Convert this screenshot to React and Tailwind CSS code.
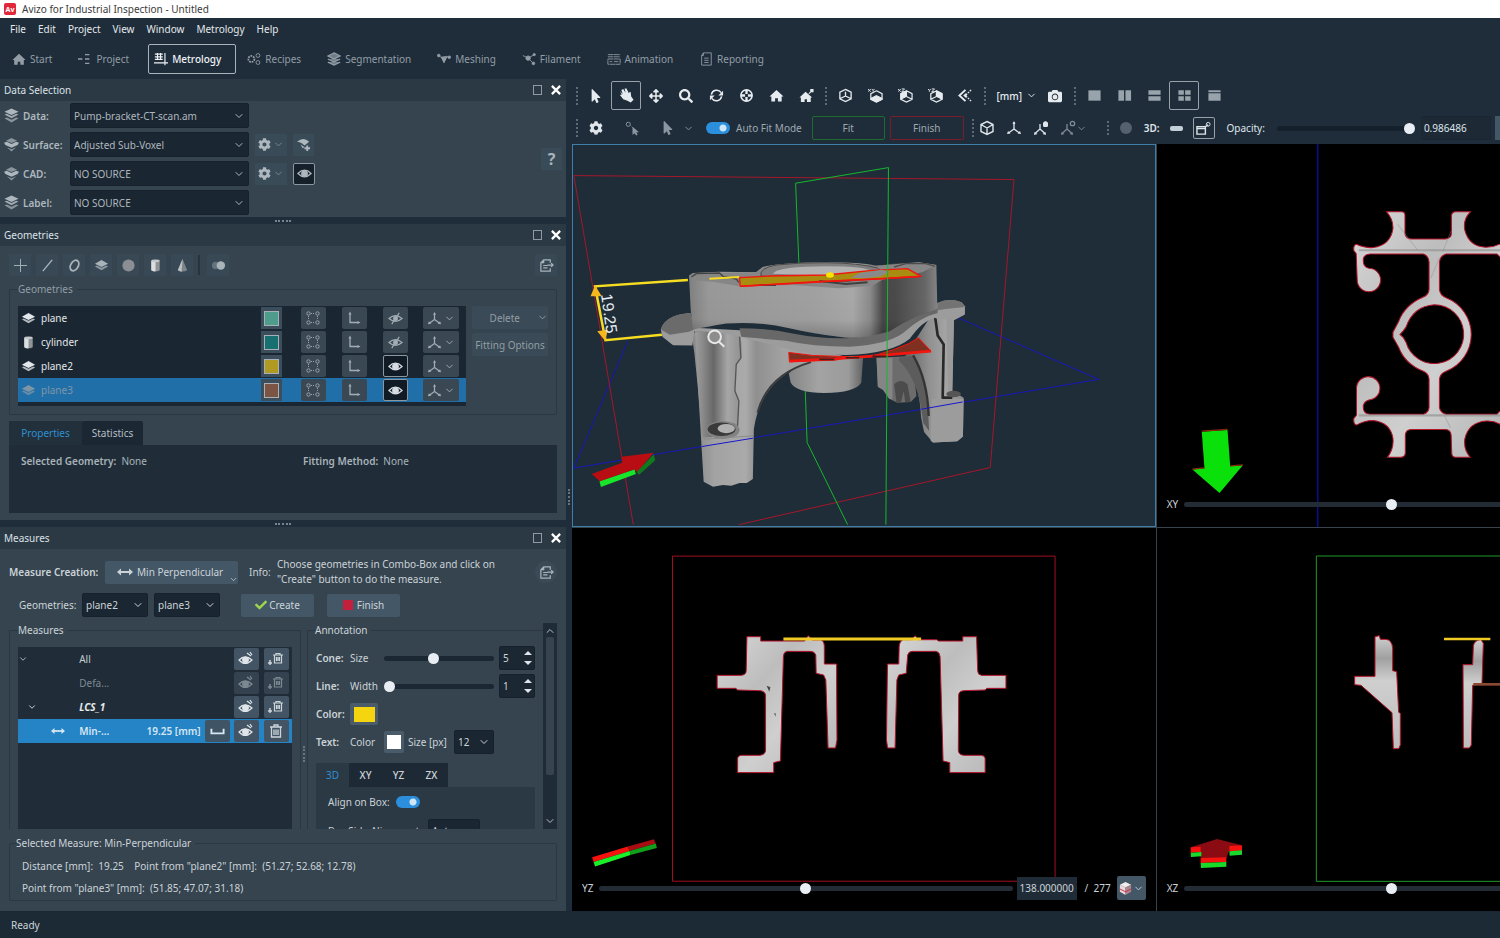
import React, { useState } from 'react';
import { FaArrowsAlt, FaCamera, FaCheck, FaCog, FaMousePointer, FaSearch } from 'react-icons/fa';
import { ChevronDown, ChevronUp } from 'lucide-react';

const menus = ['File', 'Edit', 'Project', 'View', 'Window', 'Metrology', 'Help'];

const workrooms = ['Start', 'Project', 'Metrology', 'Recipes', 'Segmentation', 'Meshing', 'Filament', 'Animation', 'Reporting'];

const sources = [
  { name: 'Data', icon: 'stack', value: 'Pump-bracket-CT-scan.am' },
  { name: 'Surface', icon: 'stackSurface', value: 'Adjusted Sub-Voxel', gear: true, extra: 'surface' },
  { name: 'CAD', icon: 'stackSurface', value: 'NO SOURCE', gear: true, extra: 'eye' },
  { name: 'Label', icon: 'stack', value: 'NO SOURCE' },
];

const geometries = [
  { name: 'plane', icon: 'layers', color: 'bg-[#4d9c8c]', visible: false },
  { name: 'cylinder', icon: 'cylinder', color: 'bg-[#17706f]', visible: false },
  { name: 'plane2', icon: 'layers', color: 'bg-[#b09a22]', visible: true },
  { name: 'plane3', icon: 'layers', color: 'bg-[#7b5444]', visible: true, selected: true },
];

const measures = [
  { name: 'All', open: true, style: 'text-[#c3cbd1]' },
  { name: 'Defa...', style: 'text-[#7d8992]', dim: true },
  { name: 'LCS_1', open: true, nested: true, style: 'font-bold italic text-[#e6ebef]' },
  { name: 'Min-...', value: '19.25 [mm]', selected: true, style: 'font-semibold text-[#d6e6f3]' },
];

function App() {
  return (
    <div className="flex min-h-screen flex-col overflow-hidden bg-[#1f2d3a] font-['Noto_Sans',sans-serif] text-[10px] leading-[14px] text-[#ccd3d8]">
      <header>
        <div className="flex h-[18px] items-center gap-1.5 bg-white pl-1 text-[#3b3b3b]">
          <span className="flex h-3 w-3 items-center justify-center rounded-xs bg-[#e0283a] text-[7px] leading-none font-bold text-white">Av</span>
          <h1>Avizo for Industrial Inspection - Untitled</h1>
        </div>
        <nav className="flex h-[21px] items-center gap-3 pl-2.5 text-[#e3e8ec]">
          {menus.map(menu => <button key={menu} type="button">{menu}</button>)}
        </nav>
        <nav className="flex h-10 items-center gap-1 pl-[5px]">
          {workrooms.map(room => (
            <button
              key={room}
              type="button"
              className={room === 'Metrology'
                ? 'flex h-[30px] items-center gap-1 rounded-xs border border-[#a9b3ba] pr-3.5 pl-[5px] font-medium text-[#eef2f5]'
                : 'flex h-[30px] items-center gap-1 border border-transparent pr-3.5 pl-1.5 text-[#929da6]'}
            >
              <Icon name={room} size={14} />
              {room}
            </button>
          ))}
        </nav>
      </header>
      <main className="flex flex-1">
        <aside className="flex w-[566px] shrink-0 flex-col gap-[7px]">
          <DataSelection />
          <Geometries />
          <Measures />
        </aside>
        <div className="flex w-1.5 shrink-0 justify-center pt-[410px]">
          <span className="h-4 border-l-2 border-dotted border-[#66747f]" />
        </div>
        <section className="flex min-w-0 flex-1 flex-col">
          <ViewToolbar />
          <GeometryToolbar />
          <Views />
        </section>
      </main>
      <footer className="flex h-[27px] items-center border-t border-[#1b2833] bg-[#1c2a36] pl-[11px]">Ready</footer>
    </div>
  );
}

function Panel({ title, children, grow }) {
  return (
    <section className={grow ? 'flex-1 bg-[#35444f]' : 'bg-[#35444f]'}>
      <div className="flex h-[22px] items-center bg-[#2b3945] pr-1 pl-1 text-[#dbe1e5]">
        <h2 className="flex-1">{title}</h2>
        <button type="button" aria-label="Float panel" className="mr-2 h-2.5 w-[9px] border border-[#8f9aa2]" />
        <button type="button" aria-label="Close panel" className="text-white"><Icon name="close" size={12} /></button>
      </div>
      {children}
    </section>
  );
}

function Select({ id, options, className }) {
  return (
    <span className={'relative inline-flex items-center ' + className}>
      <select id={id} aria-label={id} className="h-full w-full appearance-none rounded-xs border border-[#16212b] bg-[#1a2631] pr-4 pl-[3px]">
        {options.map(o => <option key={o}>{o}</option>)}
      </select>
      <ChevronDown size={12} className="pointer-events-none absolute right-1" />
    </span>
  );
}

function Switch({ label, className }) {
  return (
    <label className="flex items-center gap-1.5">
      {className === 'after' && label}
      <input
        type="checkbox"
        aria-label={label}
        defaultChecked
        className="h-3 w-6 appearance-none rounded-full bg-[#2b8fdd] bg-[radial-gradient(circle_at_17px_6px,#cfe6f8_3px,transparent_4px)]"
      />
      {className !== 'after' && label}
    </label>
  );
}

const rangeClass = 'h-3 min-w-0 appearance-none bg-transparent [&::-webkit-slider-runnable-track]:h-[5px] [&::-webkit-slider-runnable-track]:rounded-full [&::-webkit-slider-thumb]:-mt-[3px] [&::-webkit-slider-thumb]:h-[11px] [&::-webkit-slider-thumb]:w-[11px] [&::-webkit-slider-thumb]:appearance-none [&::-webkit-slider-thumb]:rounded-full [&::-webkit-slider-thumb]:bg-[#e8eef4]';

function Slider({ label, value, max, className }) {
  return <input type="range" aria-label={label} defaultValue={value} max={max} className={rangeClass + ' ' + className} />;
}

function DataSelection() {
  return (
    <Panel title="Data Selection">
      <div className="flex items-center pr-1">
        <div className="flex-1">
          {sources.map(({ name, icon, value, gear, extra }) => (
            <div key={name} className="flex h-[29px] items-center pl-1 text-[#aeb7be]">
              <Icon name={icon} size={15} />
              <label htmlFor={name} className="w-[51px] pl-1 font-semibold">{name}:</label>
              <Select id={name} options={[value]} className="h-[25px] w-[179px]" />
              {gear && (
                <button type="button" aria-label={name + ' options'} className="ml-1.5 flex h-[22px] w-8 items-center justify-center gap-0.5 bg-[#3a4b58]">
                  <FaCog size={13} /><ChevronDown size={11} className="text-[#7c8992]" />
                </button>
              )}
              {extra === 'surface' && (
                <button type="button" aria-label="Extract surface" className="ml-1.5 flex h-[22px] w-[21px] items-center justify-center bg-[#3a4b58]"><Icon name="surface" size={15} /></button>
              )}
              {extra === 'eye' && (
                <button type="button" aria-label="Show CAD" className="ml-1.5 flex h-[22px] w-[22px] items-center justify-center rounded-xs border border-[#8b969e] bg-[#15202a]"><Icon name="eye" size={15} /></button>
              )}
            </div>
          ))}
        </div>
        <button type="button" aria-label="Help" className="flex h-[22px] w-[21px] items-center justify-center bg-[#3a4b58] text-[16px] font-bold text-[#a9b4bc]">?</button>
      </div>
      <Grip />
    </Panel>
  );
}

function Grip() {
  return <div className="flex h-0 justify-center"><span className="mt-[3px] w-4 shrink-0 border-t-2 border-dotted border-[#77848e]" /></div>;
}

const shapes = ['cross', 'line', 'ellipse', 'layers', 'sphere', 'cylinder', 'cone'];
const cellButton = 'mx-auto flex h-[22px] w-[25px] items-center justify-center rounded-xs';

function Geometries() {
  const [tab, setTab] = useState('Properties');

  return (
    <Panel title="Geometries">
      <div className="px-[9px] pt-[7px] pb-[7px]">
        <div className="flex h-6 items-center gap-[5px]">
          {shapes.map(s => (
            <button key={s} type="button" aria-label={'Create ' + s} className="flex h-[22px] w-[22px] items-center justify-center bg-[#384854] text-[#a9b3ba]"><Icon name={s} size={15} /></button>
          ))}
          <span className="h-5 w-0.5 bg-[#263440]" />
          <button type="button" aria-label="Combine" className="ml-0.5 flex h-[22px] w-[22px] items-center justify-center bg-[#384854] text-[#a9b3ba]"><Icon name="combine" size={15} /></button>
          <button type="button" aria-label="Export geometries" className="ml-auto flex h-[22px] w-[22px] items-center justify-center bg-[#384854] text-[#a9b3ba]"><Icon name="export" size={15} /></button>
        </div>
        <fieldset className="mt-[5px] flex min-w-0 items-start gap-1.5 rounded-xs border border-[#2b3843] px-2 pt-2.5 pb-2">
          <legend className="pr-1 text-[#929da5]">Geometries</legend>
          <div className="h-[100px] w-[448px] bg-[#1a2631]">
            <table className="w-full table-fixed">
              <colgroup>
                <col className="w-[232px]" /><col className="w-[42px]" /><col className="w-[42px]" /><col className="w-10" /><col className="w-[42px]" /><col className="w-[50px]" />
              </colgroup>
              <tbody>
                {geometries.map(g => (
                  <tr key={g.name} className={g.selected ? 'h-6 bg-[#216fa8] text-[#7e95a6]' : 'h-6 text-[#e2e7eb]'}>
                    <td><span className="flex items-center gap-[5px] pl-[3px]"><Icon name={g.icon} size={15} />{g.name}</span></td>
                    <td>
                      <button type="button" aria-label="Color" className="mx-auto flex h-[22px] w-[21px] items-center justify-center bg-[#3c4e5c]">
                        <span className={'h-[15px] w-[15px] border border-[#a8b0b5] ' + g.color} />
                      </button>
                    </td>
                    <td><button type="button" aria-label="Points" className={cellButton + ' bg-[#3a4854] text-[#98a3ab]'}><Icon name="points" size={16} /></button></td>
                    <td><button type="button" aria-label="Local axes" className={cellButton + ' bg-[#3a4854] text-[#a4aeb5]'}><Icon name="axes2" size={16} /></button></td>
                    <td>
                      {g.visible
                        ? <button type="button" aria-label="Hide" className={cellButton + ' border border-[#8b969e] bg-[#111b25] text-[#d5dbe0]'}><Icon name="eye" size={15} /></button>
                        : <button type="button" aria-label="Show" className={cellButton + ' bg-[#3a4854] text-[#a4aeb5]'}><Icon name="eyeOff" size={15} /></button>}
                    </td>
                    <td><button type="button" aria-label="Coordinate system" className="mx-auto flex h-[22px] w-9 items-center justify-center gap-0.5 rounded-xs bg-[#3a4854] text-[#a4aeb5]"><Icon name="axes3" size={15} /><ChevronDown size={11} /></button></td>
                  </tr>
                ))}
              </tbody>
            </table>
          </div>
          <div className="flex w-[77px] flex-col gap-1 text-[#929da5]">
            <button type="button" className="flex h-[23px] items-center justify-end gap-[17px] rounded-xs bg-[#3a4a56]">Delete <ChevronDown size={11} /></button>
            <button type="button" className="h-[23px] rounded-xs bg-[#3a4a56] whitespace-nowrap">Fitting Options</button>
          </div>
        </fieldset>
        <div className="mt-1.5 flex">
          {['Properties', 'Statistics'].map(t => (
            <button key={t} type="button" onClick={() => setTab(t)} className={tab === t ? 'h-6 w-[73px] bg-[#22303c] text-[#2f8fd0]' : 'h-6 w-[61px] rounded-t-xs bg-[#1b2732] text-[#b6bfc6]'}>{t}</button>
          ))}
        </div>
        <div className="flex h-[68px] bg-[#202d38] px-3 pt-[9px] text-[#a9b3ba]">
          <p className="w-[282px]"><b className="font-semibold">Selected Geometry:</b>&nbsp; None</p>
          <p><b className="font-semibold">Fitting Method:</b>&nbsp; None</p>
        </div>
      </div>
      <Grip />
    </Panel>
  );
}

function Spin({ label, value }) {
  return (
    <span className="relative flex h-6 w-9 items-center">
      <input aria-label={label} defaultValue={value} className="h-full w-full rounded-xs border border-[#16212b] bg-[#1b2732] pl-[3px]" />
      <span className="absolute right-[3px] flex flex-col gap-1.5">
        <span className="border-x-4 border-b-4 border-x-transparent border-b-[#dfe5ea]" />
        <span className="border-x-4 border-t-4 border-x-transparent border-t-[#dfe5ea]" />
      </span>
    </span>
  );
}

function Measures() {
  return (
    <Panel title="Measures" grow>
      <div className="px-[9px] pt-2 pb-2">
        <div className="flex h-[30px] items-center">
          <b className="w-24 font-semibold whitespace-nowrap">Measure Creation:</b>
          <button type="button" className="relative flex h-[23px] w-[133px] items-center gap-1 rounded-xs bg-[#435767] pl-3 whitespace-nowrap">
            <Icon name="both" size={16} />Min Perpendicular
            <ChevronDown size={9} className="absolute right-0 bottom-0" />
          </button>
          <span className="w-[39px] pl-[11px]">Info:</span>
          <p className="flex-1 leading-[15px] whitespace-nowrap">Choose geometries in Combo-Box and click on<br />"Create" button to do the measure.</p>
          <button type="button" aria-label="Export measures" className="flex h-[22px] w-[22px] items-center justify-center rounded-full bg-[#3a4a56] text-[#a9b3ba]"><Icon name="export" size={15} /></button>
        </div>
        <div className="mt-1.5 flex h-6 items-center pl-2.5">
          <span className="w-[63px]">Geometries:</span>
          <Select id="first geometry" options={['plane2', 'plane3', 'plane', 'cylinder']} className="h-6 w-[66px]" />
          <Select id="second geometry" options={['plane3', 'plane2', 'plane', 'cylinder']} className="ml-1.5 h-6 w-[66px]" />
          <button type="button" className="ml-[21px] flex h-[23px] w-[73px] items-center justify-center gap-0.5 rounded-xs bg-[#435767]"><FaCheck size={12} className="text-[#9fd64b]" />Create</button>
          <button type="button" className="ml-[13px] flex h-[23px] w-[73px] items-center justify-center gap-1 rounded-xs bg-[#435767]"><span className="h-2.5 w-2.5 bg-[#c2203c]" />Finish</button>
        </div>
        <div className="mt-1.5 flex h-[206px] overflow-hidden">
          <fieldset className="h-[220px] w-[292px] min-w-0 shrink-0 border border-[#2b3843] px-2 pt-2.5">
            <legend className="pr-1">Measures</legend>
            <MeasureTree />
          </fieldset>
          <div className="flex w-1.5 items-center justify-center pt-14"><span className="h-4 border-l-2 border-dotted border-[#66747f]" /></div>
          <Annotation />
          <div className="flex w-3.5 flex-col items-center justify-between bg-[#1f2c37] py-0.5 text-[#b6bfc6]">
            <ChevronUp size={12} />
            <span className="mb-auto h-[138px] w-2 rounded-xs bg-[#35444f]" />
            <ChevronDown size={12} />
          </div>
        </div>
        <fieldset className="mt-[7px] min-w-0 rounded-xs border border-[#2b3843] px-3 pt-[5px] pb-px leading-[22px]">
          <legend className="-ml-1.5 pr-1 leading-[14px]">Selected Measure: Min-Perpendicular</legend>
          <p>Distance [mm]:&nbsp; 19.25 &nbsp;&nbsp;&nbsp;Point from "plane2" [mm]:&nbsp; (51.27; 52.68; 12.78)</p>
          <p>Point from "plane3" [mm]:&nbsp; (51.85; 47.07; 31.18)</p>
        </fieldset>
      </div>
    </Panel>
  );
}

function MeasureTree() {
  return (
    <div className="h-[190px] bg-[#202d38]">
      <table className="w-full table-fixed">
        <colgroup>
          <col className="w-[61px]" /><col className="w-10" /><col className="w-[83px]" /><col className="w-[29px]" /><col className="w-[29px]" /><col className="w-[31px]" />
        </colgroup>
        <tbody>
          {measures.map(m => (
            <tr key={m.name} className={(m.selected ? 'h-6 bg-[#2484c6] ' : 'h-6 ') + m.style}>
              <td>
                {m.open && <ChevronDown size={10} className={m.nested ? 'ml-[9px]' : ''} />}
                {m.selected && <span className="flex justify-center pl-[18px]"><Icon name="both" size={14} /></span>}
              </td>
              <td className="whitespace-nowrap">{m.name}</td>
              <td className="pr-0.5 text-right whitespace-nowrap">{m.value}</td>
              <td>{m.selected && <button type="button" aria-label="Bracket" className={cellButton + ' bg-[#3f5566]'}><Icon name="bracket" size={15} /></button>}</td>
              <td><button type="button" aria-label="Show measure" className={cellButton + (m.dim ? ' bg-[#33424e] text-[#7d8992]' : ' bg-[#435564] text-[#dfe5ea]')}><Icon name="eyeSpark" size={16} /></button></td>
              <td><button type="button" aria-label="Delete measure" className={cellButton + (m.dim ? ' bg-[#33424e] text-[#7d8992]' : ' bg-[#435564] text-[#cdd5db]')}><Icon name={m.selected ? 'trash' : 'trashDown'} size={16} /></button></td>
            </tr>
          ))}
        </tbody>
      </table>
    </div>
  );
}

function Annotation() {
  const [view, setView] = useState('3D');

  return (
    <fieldset className="h-[260px] min-w-0 flex-1 border border-r-0 border-[#2b3843] pt-[7px] pr-2 pl-2">
      <legend className="-ml-px pr-1">Annotation</legend>
      <div className="flex h-7 items-center">
        <b className="w-[34px] font-semibold">Cone:</b>
        <span className="w-[34px]">Size</span>
        <Slider label="Cone size" value={44} max={100} className="w-[110px] [&::-webkit-slider-runnable-track]:bg-[#1b2732]" />
        <span className="ml-auto"><Spin label="Cone size value" value="5" /></span>
      </div>
      <div className="flex h-7 items-center">
        <b className="w-[34px] font-semibold">Line:</b>
        <span className="w-[34px]">Width</span>
        <Slider label="Line width" value={0} max={100} className="w-[110px] [&::-webkit-slider-runnable-track]:bg-[#1b2732]" />
        <span className="ml-auto"><Spin label="Line width value" value="1" /></span>
      </div>
      <div className="flex h-7 items-center">
        <b className="w-[34px] font-semibold">Color:</b>
        <button type="button" aria-label="Line color" className="flex h-[22px] w-7 items-center justify-center rounded-xs bg-[#4a5b69]"><span className="h-[15px] w-[21px] bg-[#f5d50f]" /></button>
      </div>
      <div className="flex h-7 items-center">
        <b className="w-[34px] font-semibold">Text:</b>
        <span className="w-[34px]">Color</span>
        <button type="button" aria-label="Text color" className="mr-1 flex h-[22px] w-5 items-center justify-center rounded-xs bg-[#4a5b69]"><span className="h-3.5 w-3.5 bg-white" /></button>
        <span className="w-[46px] whitespace-nowrap">Size [px]</span>
        <Select id="text size" options={['12', '14', '16']} className="h-6 w-10" />
      </div>
      <div className="mt-[7px] flex">
        {['3D', 'XY', 'YZ', 'ZX'].map(v => (
          <button key={v} type="button" onClick={() => setView(v)} className={view === v ? 'h-6 w-[33px] bg-[#2b3945] text-[#2f8fd0]' : 'h-6 w-[33px] bg-[#1d2a35] font-medium'}>{v}</button>
        ))}
      </div>
      <div className="bg-[#2b3945] pt-2 pl-3">
        <div className="h-6"><Switch label="Align on Box:" className="after" /></div>
        <div className="flex h-6 items-center gap-1.5">
          <label htmlFor="alignment">Box Side Alignment:</label>
          <Select id="alignment" options={['Auto']} className="h-6 w-[52px]" />
        </div>
      </div>
    </fieldset>
  );
}

const viewTools = [
  ['cursor', 'hand', 'move', 'zoom', 'rotate', 'focus', 'home', 'setHome'],
  ['isoCube', 'viewXY', 'viewXZ', 'viewYZ', 'persp'],
];
const layouts = ['one', 'columns', 'rows', 'four', 'titled'];

function Handle() {
  return <span className="mr-[3px] ml-1 h-[18px] w-0.5 shrink-0 border-l-2 border-dotted border-[#5d6b76]" />;
}

function ToolButton({ name, active }) {
  return (
    <button type="button" aria-label={name} className={active ? 'flex h-[29px] w-[30px] shrink-0 items-center justify-center rounded-xs border border-[#96a1a9]' : 'flex h-[29px] w-[30px] shrink-0 items-center justify-center'}>
      <Icon name={name} size={15} />
    </button>
  );
}

function ViewToolbar() {
  return (
    <div className="flex h-[33px] items-center text-[#e6ebef]">
      <Handle />
      {viewTools[0].map(t => <ToolButton key={t} name={t} active={t === 'hand'} />)}
      <Handle />
      {viewTools[1].map(t => <ToolButton key={t} name={t} />)}
      <Handle />
      <button type="button" className="flex w-[51px] shrink-0 items-center justify-end gap-1 pr-[3px] font-medium">[mm] <ChevronDown size={11} /></button>
      <ToolButton name="camera" />
      <Handle />
      <span className="flex text-[#98a3ab]">{layouts.map(t => <ToolButton key={t} name={t} active={t === 'four'} />)}</span>
    </div>
  );
}

function GeometryToolbar() {
  return (
    <div className="flex h-8 items-center text-[#dfe5ea]">
      <Handle />
      <ToolButton name="gear" />
      <span className="flex items-center text-[#8b97a0]">
        <span className="mx-1.5"><ToolButton name="pick" /></span>
        <ToolButton name="cursor" /><ChevronDown size={11} />
      </span>
      <span className="mr-2.5 ml-3 whitespace-nowrap text-[#9da8b0]"><Switch label="Auto Fit Mode" /></span>
      <button type="button" className="mr-[5px] h-6 w-[73px] shrink-0 rounded-xs border border-[#1d6b2e] text-[#9da8b0]">Fit</button>
      <button type="button" className="mr-1 h-6 w-[74px] shrink-0 rounded-xs border border-[#7a1d2a] text-[#9da8b0]">Finish</button>
      <Handle />
      <span className="flex shrink-0 items-center gap-[11px] pl-0.5">
        <Icon name="cube" size={16} /><Icon name="axes3" size={16} /><Icon name="axes3b" size={16} />
        <span className="flex items-center text-[#7f8b94]"><Icon name="axes3c" size={16} /><ChevronDown size={11} /></span>
      </span>
      <span className="ml-4"><Handle /></span>
      <span className="mr-3 ml-2 h-3 w-3 shrink-0 rounded-full bg-[#55616c]" />
      <b className="mr-2.5 font-semibold">3D:</b>
      <span className="mr-2.5 h-[5px] w-[13px] shrink-0 rounded-xs bg-[#c3cfd8]" />
      <button type="button" aria-label="Clipping box" className="mr-3 flex h-[22px] w-[22px] shrink-0 items-center justify-center rounded-xs border border-[#96a1a9]"><Icon name="clip" size={15} /></button>
      <span className="mr-3 shrink-0">Opacity:</span>
      <Slider label="Opacity" value={100} max={100} className="w-[138px] shrink-0 [&::-webkit-slider-runnable-track]:bg-[#14202b]" />
      <input aria-label="Opacity value" defaultValue="0.986486" className="mr-1 ml-1.5 h-6 w-[70px] shrink-0 border border-[#1a2631] bg-[#1d2a36] pl-0.5" />
      <span className="h-6 min-w-1 flex-1 bg-[#435767]" />
    </div>
  );
}

function Views() {
  return (
    <div className="grid flex-1 grid-cols-[17fr_10fr] grid-rows-2 gap-px bg-[#39434b]">
      <div className="relative overflow-hidden border border-[#3f7ea8] bg-[#1f2d38]"><Scene /></div>
      <div className="relative flex flex-col justify-end overflow-hidden bg-black">
        <SliceXY />
        <SliceBar name="XY" value={207} max={400} wide />
      </div>
      <div className="relative flex flex-col justify-end overflow-hidden bg-black">
        <SliceYZ />
        <SliceBar name="YZ" value={138} max={277}>
          <input aria-label="Slice" defaultValue="138.000000" className="ml-1 h-[23px] w-[60px] bg-[#1f2c37] pl-[3px]" />
          <span className="mr-1.5 ml-2 whitespace-pre">/  277</span>
          <button type="button" aria-label="Slice orientation" className="mr-2.5 flex h-6 w-[29px] items-center justify-center rounded-xs bg-[#435767]">
            <Icon name="redCube" size={15} /><ChevronDown size={11} />
          </button>
        </SliceBar>
      </div>
      <div className="relative flex flex-col justify-end overflow-hidden bg-black">
        <SliceXZ />
        <SliceBar name="XZ" value={207} max={400} wide />
      </div>
    </div>
  );
}

function SliceBar({ name, value, max, wide, children }) {
  return (
    <div className="relative mb-[11px] flex h-6 items-center">
      <span className="w-[27px] shrink-0 pl-2.5">{name}</span>
      <Slider label={name + ' slice'} value={value} max={max} className={wide ? 'w-[402px] shrink-0 [&::-webkit-slider-runnable-track]:bg-[#232c34]' : 'flex-1 [&::-webkit-slider-runnable-track]:bg-[#232c34]'} />
      {children}
    </div>
  );
}

// The bracket in perspective, with the three slice frames and the distance arrow
function Scene() {
  return (
    <svg viewBox="1 0 583 382" preserveAspectRatio="xMinYMin meet" className="absolute inset-0 h-full w-full">
      <defs>
        <linearGradient id="body" x1="0" y1="0" x2="1" y2="0">
          <stop offset="0" stopColor="#808080" /><stop offset=".08" stopColor="#989898" /><stop offset=".5" stopColor="#a0a0a0" /><stop offset=".66" stopColor="#a8a8a8" /><stop offset=".73" stopColor="#8a8a8a" /><stop offset=".78" stopColor="#484848" /><stop offset=".83" stopColor="#4a4a4a" /><stop offset=".95" stopColor="#666" /><stop offset="1" stopColor="#858585" />
        </linearGradient>
        <linearGradient id="shade" x1="0" y1="0" x2="0" y2="1">
          <stop offset="0" stopColor="#000" stopOpacity="0" /><stop offset=".6" stopColor="#000" stopOpacity=".02" /><stop offset="1" stopColor="#000" stopOpacity=".22" />
        </linearGradient>
        <linearGradient id="leg" x1="0" y1="0" x2="1" y2="0">
          <stop offset="0" stopColor="#868686" /><stop offset=".15" stopColor="#a2a2a2" /><stop offset=".35" stopColor="#aaa" /><stop offset=".42" stopColor="#8f8f8f" /><stop offset=".6" stopColor="#a3a3a3" /><stop offset="1" stopColor="#979797" />
        </linearGradient>
        <linearGradient id="post" x1="0" y1="0" x2="1" y2="0">
          <stop offset="0" stopColor="#5f5f5f" /><stop offset=".4" stopColor="#8f8f8f" /><stop offset=".7" stopColor="#a4a4a4" /><stop offset="1" stopColor="#8a8a8a" />
        </linearGradient>
        <linearGradient id="groove" x1="0" y1="0" x2="1" y2="0">
          <stop offset="0" stopColor="#9d9d9d" /><stop offset=".15" stopColor="#8c8c8c" /><stop offset=".4" stopColor="#686868" /><stop offset=".7" stopColor="#a6a6a6" /><stop offset="1" stopColor="#909090" />
        </linearGradient>
        <linearGradient id="boss" x1="0" y1="0" x2="1" y2="0">
          <stop offset="0" stopColor="#858585" /><stop offset=".4" stopColor="#a3a3a3" /><stop offset=".8" stopColor="#9b9b9b" /><stop offset="1" stopColor="#626262" />
        </linearGradient>
      </defs>

      <g transform="scale(.3724 .3333)" fill="none">
        <path d="M150 590 5 972 1418 705 1030 515" stroke="#1717b8" vectorEffect="non-scaling-stroke" />
        <path d="M165 1142 5 92 1190 104 1126 970 450 1142" stroke="#a5172b" vectorEffect="non-scaling-stroke" />
        <path d="M611 360 602 115 852 68M628 740 633 895 742 1142" stroke="#14b82c" vectorEffect="non-scaling-stroke" />
      </g>

      <g transform="translate(88 105) scale(.3333)" fill="none" strokeLinejoin="round">
        {/* far leg */}
        <path d="M652 325 656 412 672 422 690 448 715 460 755 458 772 440 760 320Z" fill="#6c6c6c" />
        <path d="M652 325 656 412 672 422 690 448 700 450V325Z" fill="#858585" />
        <path d="M705 405Q725 385 745 405L755 458H738L734 425 725 462 712 458Z" fill="#4c4c4c" />

        {/* right leg */}
        <path d="M770 270 815 200 885 205 880 425 914 445 912 562 895 576 822 580 795 548 786 505Q782 400 735 325Z" fill="url(#post)" />
        <path d="M720 325 765 318Q806 390 810 545L792 520Q780 390 720 335Z" fill="#5c5c5c" />
        <path d="M762 318Q805 390 809 500" stroke="#343434" strokeWidth="7" />
        <path d="M815 575 818 450H848L914 448 912 562 895 576 822 580Z" fill="#9c9c9c" />
        <path d="M828 200 836 258 854 285 851 445H880" stroke="#292929" strokeWidth="8" />
        <ellipse cx="884" cy="434" rx="22" ry="10" fill="#555" />
        <path d="M862 205H885L880 425H868Z" fill="#9b9b9b" />
        <path d="M835 160Q870 144 908 158L918 170V195L900 205 885 212 830 206 800 195Z" fill="#9c9c9c" />
        <path d="M835 160Q870 144 908 158L918 172 860 178 835 182Z" fill="#737373" />

        {/* boss */}
        <path d="M388 372 394 400Q410 430 495 431 588 430 606 400L612 320H440Z" fill="url(#boss)" />

        {/* front leg, web and arch */}
        <path d="M95 250 104 310 116 430 132 698 160 713 190 708 215 710 240 702 262 702 280 690 283 540Q305 385 455 338L560 322 400 280 240 245Z" fill="url(#leg)" />
        <path d="M455 338Q325 375 294 490" stroke="#3b3b3b" strokeWidth="6" />
        <path d="M106 245H235L246 280V325L230 345 226 425 238 455 232 560 128 565 116 430Z" fill="url(#groove)" />
        <path d="M240 258 244 325 230 345 226 425 238 455 234 530" stroke="#555" strokeWidth="4" />
        <ellipse cx="190" cy="542" rx="50" ry="27" fill="#828282" />
        <ellipse cx="186" cy="540" rx="42" ry="20" fill="#3a3a3a" />
        <ellipse cx="200" cy="538" rx="26" ry="14" fill="#b0b0b0" />
        <path d="M134 570 280 560" stroke="#8b8b8b" strokeWidth="3" />

        {/* flange */}
        <path d="M3 240Q15 196 92 190L105 235 240 242Q400 280 540 285 690 280 740 240 780 200 835 188L825 206Q790 214 752 268 700 312 560 317 440 314 370 295L250 264Q180 244 104 246L98 288 40 287 8 262Z" fill="#9c9c9c" />
        <path d="M3 240Q15 196 92 190L108 238 88 247 30 256Z" fill="#6b6b6b" />
        <path d="M240 236Q330 236 400 252 480 268 560 266 650 262 710 225 770 198 836 176V190Q785 202 735 248 690 284 570 292 460 292 380 274L245 262Z" fill="#686868" />

        {/* upper block */}
        <path id="block" d="M88 78 100 70 180 66 290 68 310 52Q380 38 500 38 600 38 650 48L700 42 780 38 832 46 835 178Q760 200 690 246 600 272 540 262 460 252 390 236 300 215 200 222 140 232 100 240L93 180Z" fill="url(#body)" />
        <path d="M93 180 90 130H835V178Q760 200 690 246 600 272 540 262 460 252 390 236 300 215 200 222 140 232 100 240Z" fill="url(#shade)" />
        <path d="M88 78 100 70 290 68 310 52 500 38 650 48 780 38 832 46 790 68 670 90 640 108 540 116 400 106 240 110 170 98 95 90Z" fill="#868686" />
        <path d="M705 52 740 42 800 42 828 50" stroke="#4d4d4d" strokeWidth="4" />
        <path d="M95 82 110 72 180 70 190 80 230 88 238 98" stroke="#444" strokeWidth="4" />
        <path d="M304 78Q300 55 350 46 420 38 500 39 600 40 655 55 675 66 640 84L560 96 380 94Z" fill="#7f7f7f" stroke="#4b4b4b" strokeWidth="3" />
        <path d="M340 72Q360 50 500 50 620 50 640 66L500 78Z" fill="#b3b3b3" />

        {/* upper fitted plane */}
        <path d="M240 84 330 79 500 76 640 62 745 57 786 80 650 88 242 110Z" fill="#a98d10" stroke="#f2160f" strokeWidth="4" />
        <path d="M575 84 600 70 668 60 690 66 665 80 620 86Z" fill="#8a8a8a" />
        <path d="M300 106H350M480 94 560 103 625 98" stroke="#404040" strokeWidth="6" />
        <path d="M242 110 480 96 650 88 786 80" stroke="#f2160f" strokeWidth="5" />
        <ellipse cx="512" cy="76" rx="12" ry="8" fill="#f8e400" />

        {/* lower fitted plane */}
        <path d="M388 309 460 318 570 322 530 332 390 337ZM705 300 750 282 778 265 816 305 640 320Z" fill="#7f3020" stroke="#f2160f" strokeWidth="3" />
        <path d="M390 335 530 328 640 320 816 305" stroke="#f2160f" strokeWidth="8" />
        <path d="M480 330H525M560 325H600M640 321H680" stroke="#4a1c18" strokeWidth="5" />
      </g>

      <g transform="scale(.3724 .3333)" fill="none">
        <path d="M852 68 845 1142" stroke="#14b82c" vectorEffect="non-scaling-stroke" />
        <path d="M350 907 487 882M940 795 1052 773" stroke="#1717d0" vectorEffect="non-scaling-stroke" />

        {/* distance */}
        <path d="M312 406 62 425 90 587 242 571" stroke="#f7dd22" strokeWidth="2.5" vectorEffect="non-scaling-stroke" />
        <path d="M370 402 450 397" stroke="#f7dd22" strokeWidth="2" vectorEffect="non-scaling-stroke" />
        <path d="M62 422 50 455 80 455ZM90 590 68 560 96 556Z" fill="#f5b81c" />

        {/* orientation arrow */}
        <path d="M53 990 135 956 133 938 220 926 176 984 166 976 76 1012Z" fill="#b80d12" />
        <path d="M74 1012 168 976 172 990 78 1029Z" fill="#19e62a" />
        <path d="M220 930 224 948 180 993 174 984Z" fill="#117a1c" />

        <g stroke="#e8e8e8" strokeWidth="2">
          <ellipse cx="384" cy="577" rx="17" ry="19" fill="#8d8d8d" vectorEffect="non-scaling-stroke" />
          <path d="M396 592 410 607" vectorEffect="non-scaling-stroke" />
        </g>
      </g>
      <text transform="translate(29 150) rotate(82)" fontSize="16" fill="#e8eef4" fontFamily="Liberation Sans, sans-serif">19.25</text>
    </svg>
  );
}

function SliceXY() {
  return (
    <svg viewBox="0 0 1032 1146" preserveAspectRatio="xMinYMid slice" className="absolute inset-0 h-full w-full">
      <defs>
        <linearGradient id="slice" x1="0" y1="0" x2="1" y2="1">
          <stop offset="0" stopColor="#d8d8d8" /><stop offset=".35" stopColor="#bdbdbd" /><stop offset=".6" stopColor="#cfcfcf" /><stop offset="1" stopColor="#b4b4b4" />
        </linearGradient>
      </defs>
      <path d="M481 0V1146" stroke="#0c0ca8" strokeWidth="4" />
      <g fill="url(#slice)" stroke="#b3142a" strokeWidth="3" transform="translate(-3 3)">
        <path d="M690 200H735Q745 200 745 210V265Q747 281 765 281H865Q883 281 884 265V212Q885 200 897 200H941Q918 222 924 255 937 305 988 306 1015 306 1040 290V345L1020 326H868Q850 332 848 350V432Q850 450 868 457A118 118 0 0 1 868 677Q850 684 848 700V785Q850 800 868 806H1020L1040 785V842Q1015 824 988 826 935 830 924 880 920 912 940 934H897Q885 934 885 922L883 868Q882 851 865 851H765Q747 851 746 868V922Q745 934 733 934H693Q712 908 709 878 702 830 650 824 622 824 600 838 590 836 592 818L600 808V728A35 35 0 1 1 637 763Q620 768 620 785 620 804 640 806H800Q816 800 817 785V700Q816 684 800 677 745 655 726 605L709 575V560L726 528Q745 478 800 455 816 448 817 432V350Q816 332 800 326H640Q620 328 620 345 620 366 637 369A35 35 0 1 1 602 404L599 325 592 316Q590 298 600 297 622 308 650 307 702 300 709 250 710 222 690 200Z" />
        <path d="M833 478A88 88 0 1 1 748 590L740 576 730 567 740 556 748 545Q770 482 833 478Z" fill="#000" />
      </g>
      <path d="M604 318H1032M604 812H1032" stroke="#8c8c8c" strokeWidth="6" opacity=".6" />
      <path d="M720 240 780 318M880 260 855 322M820 400 845 340M860 812 878 850" stroke="#8c8c8c" strokeWidth="3" opacity=".4" />
      <path d="M134 861 211 856 219 964 257 961 187 1044 106 974 142 970Z" fill="#0ae10a" />
      <path d="M134 859 211 854M106 973 142 969M219 963 257 960" stroke="#8c2a10" strokeWidth="4" />
    </svg>
  );
}

function SliceYZ() {
  return (
    <svg viewBox="0 0 584 383" preserveAspectRatio="xMidYMid meet" className="absolute inset-0 h-full w-full">
      <g transform="translate(0 12) scale(.3724 .3333)" stroke="#b3142a">
        <path d="M270 48H1298V1024H270Z" fill="none" stroke="#a01022" vectorEffect="non-scaling-stroke" />
        <g fill="url(#slice)">
          <path d="M470 290H507V303H625L635 287 645 300H668Q678 302 678 320V372H711V420L712 600 708 624H688L682 420 676 405 656 400 655 345Q652 334 640 334H578Q568 336 568 350L560 663 542 668V698H445V655Q446 646 458 646H505Q520 644 520 630V465Q518 453 505 452L445 450 440 445H390V406H455Q468 404 468 392Z" vectorEffect="non-scaling-stroke" />
          <path d="M1087 290H1050V303H985L980 299H930L922 287 912 299H890Q880 303 879 320L878 372H848L847 420 845 600 848 624H868L873 420 878 405 898 400 902 345Q904 334 915 334H978Q988 336 989 350L997 663 1015 668V698H1110V655Q1109 646 1098 646H1052Q1038 644 1038 630L1039 465Q1040 453 1052 452L1110 450 1115 445H1166V406H1100Q1090 404 1090 392Z" vectorEffect="non-scaling-stroke" />
        </g>
        <path d="M523 437 533 442 530 455ZM543 520 547 520 547 530Z" fill="#444" stroke="none" />
        <path d="M568 297H938" stroke="#f2cb24" strokeWidth="3" vectorEffect="non-scaling-stroke" />
        <g stroke="none">
          <path d="M54 952 150 920 155 933 58 966Z" fill="#f5120f" />
          <path d="M58 966 155 933 157 945 62 980Z" fill="#19f02a" />
          <path d="M150 920 220 898 225 911 155 933Z" fill="#a80d12" />
          <path d="M155 933 225 911 228 924 157 945Z" fill="#11a01c" />
        </g>
      </g>
    </svg>
  );
}

function SliceXZ() {
  return (
    <svg viewBox="0 0 1032 1149" preserveAspectRatio="xMinYMid slice" className="absolute inset-0 h-full w-full">
      <defs>
        <linearGradient id="thin" x1="0" y1="0" x2="0" y2="1">
          <stop offset="0" stopColor="#cfcfcf" /><stop offset=".2" stopColor="#a0a0a0" /><stop offset=".4" stopColor="#cfcfcf" /><stop offset="1" stopColor="#bdbdbd" />
        </linearGradient>
      </defs>
      <g transform="translate(-3 36)">
        <path d="M1040 48H481V1024H1040" fill="none" stroke="#1f9a28" strokeWidth="3" />
        <g fill="url(#thin)" stroke="#b3142a" strokeWidth="3">
          <path d="M657 290 670 287 673 298H690Q708 300 710 325V392L722 395 728 517 733 520V615L728 626H712L708 518 615 436 596 434V409H657Z" />
          <path d="M952 318Q955 300 975 299L982 310 978 430 950 436 946 615 940 624H922L921 374H950Z" />
        </g>
        <path d="M864 297H1003" stroke="#f2cb24" strokeWidth="8" />
        <path d="M952 433H1040" stroke="#8a4a32" strokeWidth="8" />
        <path d="M104 922 183 897 258 916 220 932 211 954 134 954V936Z" fill="#8a0c12" />
        <path d="M104 922 134 920V936L104 938ZM220 918 258 916V932L220 934ZM134 954 211 952V966L134 969Z" fill="#f5120f" />
        <path d="M104 938 136 936V949L105 951ZM220 934 258 931V944L221 947ZM134 969 211 966V980L135 984Z" fill="#19d92a" />
      </g>
    </svg>
  );
}

const filledIcons = { cursor: FaMousePointer, move: FaArrowsAlt, zoom: FaSearch, camera: FaCamera, gear: FaCog };

const hexagon = 'M8 1.500 14 4.500V11.500L8 14.500 2 11.500V4.500Z';
const house = <path d="M8 2 15.500 9H13.500V14.500H9.500V11H6.500V14.500H2.500V9H.5Z" fill="currentColor" stroke="none" />;

const drawnIcons = {
  close: <path d="M2.500 2.500 13.500 13.500M13.500 2.500 2.500 13.500" strokeWidth="3" />,
  both: <g fill="currentColor" stroke="none"><path d="M0 8 4 4.500V11.500ZM16 8 12 4.500V11.500Z" /><path d="M3 7H13V9H3Z" /></g>,
  hand: <path d="M1 3.500 4 6.500 2.500 2 4.500 1 7 5 6 .5 8 .5 10.500 5.500 11.500 4 12.500 4.500 13 9 15.500 12.500 12.500 15.500 9 13.500 4.500 12 1 7.500 3 7Z" fill="currentColor" stroke="none" />,
  home: house,
  Start: house,
  Project: <path d="M0 8H5M8 3H13M8 8H13M8 13H13" strokeWidth="1.500" />,
  Metrology: <path d="M1 2.500H10M1 5.500H10M1 8.500H10M4 1V9M7.500 1V9M0 12.500H16M12.500 1V15" strokeWidth="1.300" />,
  Recipes: <g><circle cx="5" cy="8" r="3.500" strokeWidth="2" strokeDasharray="2 1" /><circle cx="12.500" cy="4" r="2.200" /><circle cx="12.500" cy="12" r="2.200" /></g>,
  Segmentation: <path d="M8 1 15 4.500 8 8 1 4.500ZM1 8 8 11.500 15 8M1 11.500 8 15 15 11.500" strokeWidth="1.500" fill="currentColor" fillOpacity=".7" />,
  Meshing: <g><path d="M1 4 5 6 11 5 15 6M5 6 8 12 11 5" /><path d="M5 6H11L8 12Z" fill="currentColor" /><circle cx="2" cy="4" r="1.500" fill="currentColor" /><circle cx="14" cy="6" r="1.500" fill="currentColor" /></g>,
  Filament: <g><path d="M1 4 7 7 14 3M7 7 13 13" /><circle cx="7" cy="7" r="2.500" fill="currentColor" /><circle cx="14" cy="3" r="1.300" fill="currentColor" /><circle cx="13" cy="13" r="1.500" fill="currentColor" /></g>,
  Animation: <path d="M1 3H15M1 5.500H15M1 8H15V14H1ZM3 11H6M8 11H13" strokeDasharray="6 .5" />,
  Reporting: <path d="M5 1H14V15H3V4ZM5 1V4H3M6 7H11M6 9.500H11M6 12H11" />,
  stack: <g fill="currentColor" stroke="none"><path d="M8 .5 15.500 4 8 7.500.5 4Z" /><path d="M.5 7 3 6 8 8.500 13 6 15.500 7 8 11Z" opacity=".9" /><path d="M.5 11 3 10 8 12.500 13 10 15.500 11 8 15.500Z" opacity=".7" /></g>,
  stackSurface: <g fill="currentColor" stroke="none"><path d="M8 1 14 4 8 6.500 2 4Z" opacity=".7" /><path d="M0 6 3 5 8 7.500 13 5 16 6 14.500 8.500 8 11.500 1.500 8.500Z" /><path d="M3 11 8 13 13 11 8 15.500Z" opacity=".7" /></g>,
  layers: <g fill="currentColor" stroke="none"><path d="M8 2 15 6 8 9.500 1 6Z" /><path d="M1 9 3 8 8 10.500 13 8 15 9 8 13Z" opacity=".75" /></g>,
  surface: <g fill="currentColor" stroke="none"><path d="M1 5Q8-1 14 5L9 9Q5 5 1 5Z" /><path d="M5 8 9 11 7 12Z" /><path d="M12 9V15M9 12H15" stroke="currentColor" strokeWidth="2" /></g>,
  eye: <g><path d="M1 8Q8 1 15 8 8 15 1 8Z" strokeWidth="1.300" /><circle cx="8" cy="8" r="3.200" fill="currentColor" /></g>,
  eyeOff: <g><path d="M1 8Q8 2 15 8 8 14 1 8ZM4 14 12 2" strokeWidth="1.200" /><circle cx="8" cy="8" r="2.200" fill="currentColor" /></g>,
  eyeSpark: <g><path d="M1 9Q7 3 14 9 7 16 1 9ZM9 2 13 5M12 1 14 4" strokeWidth="1.200" /><circle cx="7.500" cy="9" r="3" fill="currentColor" /></g>,
  trash: <path d="M2 4H14M6 4V2H10V4M3.500 4V14H12.500V4M6 6.500V12M8 6.500V12M10 6.500V12" strokeWidth="1.300" />,
  trashDown: <g><path d="M5 4H15M8 4V2.500H12V4M6.500 4V12H13.500V4M8.500 6V10M10 6V10M11.500 6V10" strokeWidth="1.200" /><path d="M2 9V14M0 12H4" strokeWidth="1.500" /></g>,
  bracket: <path d="M1.500 5V10H14.500V5" strokeWidth="2" />,
  cross: <path d="M8 1V15M1 8H15" />,
  line: <path d="M3 14 13 2" strokeWidth="1.500" />,
  ellipse: <ellipse cx="8" cy="8" rx="4" ry="6" transform="rotate(30 8 8)" strokeWidth="2" />,
  sphere: <circle cx="8" cy="8" r="6.500" fill="#8b8f93" stroke="none" />,
  cylinder: <g stroke="none"><path d="M3.500 3V13Q8 15.500 12.500 13V3Z" fill="#8f9498" /><path d="M3.500 3V13Q5 14.500 8 14.500V4Z" fill="#dcdfe2" /><ellipse cx="8" cy="3" rx="4.500" ry="1.500" fill="#c4c8cb" /></g>,
  cone: <g stroke="none"><path d="M8 1 13 13Q8 16 3 13Z" fill="#7e858a" /><path d="M8 1 7 15 3 13Z" fill="#bcc1c5" /></g>,
  combine: <g stroke="none" fill="currentColor"><circle cx="5" cy="8" r="4" opacity=".4" /><circle cx="10.500" cy="8" r="4.500" /></g>,
  export: <path d="M12 5V2H5L2 5V14H12V11M5 2V5H2M4.500 8H9M4.500 10.500H9M9 7.500H15M13 5.500 15 7.500 13 9.500" strokeWidth="1.300" />,
  points: <g><circle cx="3.500" cy="3.500" r="1.700" /><circle cx="12.500" cy="3.500" r="1.700" /><circle cx="3.500" cy="12.500" r="1.700" /><circle cx="12.500" cy="12.500" r="1.700" /><path d="M6 3.500H10M6 12.500H10M3.500 6V10M12.500 6V10" strokeDasharray="1 1" /></g>,
  axes2: <g><path d="M4 4V12.500H12" strokeWidth="1.300" /><path d="M2.500 4.500 4 1.500 5.500 4.500ZM11.500 11 14.500 12.500 11.500 14Z" fill="currentColor" stroke="none" /></g>,
  axes3: <g><path d="M8 2V9L2.500 13M8 9 13.500 13" strokeWidth="1.300" /><path d="M6.500 4 8 1 9.500 4ZM1 14 2 11 4.500 13.500ZM15 14 14 11 11.500 13.500Z" fill="currentColor" stroke="none" /></g>,
  axes3b: <g><path d="M7 4V9L2 13.500M7 9 12 13.500" strokeWidth="1.300" /><path d="M1 15 1.500 12 4.500 14ZM13 15 12.500 12 9.500 14Z" fill="currentColor" stroke="none" /><rect x="10.500" y="2.500" width="4" height="4" rx=".5" fill="currentColor" /><path d="M11 2.500Q12.500-.5 14 2.500" /></g>,
  axes3c: <g><path d="M7 4V9L2 13.500M7 9 12 13.500" strokeWidth="1.300" /><path d="M1 15 1.500 12 4.500 14ZM13 15 12.500 12 9.500 14Z" fill="currentColor" stroke="none" /><circle cx="12.500" cy="3.500" r="2.200" strokeWidth="1.300" /></g>,
  rotate: <g><path d="M2.500 7A5.800 5.800 0 0 1 13 5M13.500 9A5.800 5.800 0 0 1 3 11" strokeWidth="1.600" /><path d="M15 3V8H10ZM1 13V8H6Z" fill="currentColor" stroke="none" /></g>,
  focus: <g><circle cx="8" cy="8" r="6" strokeWidth="1.700" /><path d="M8 2V6.500M8 9.500V14M2 8H6.500M9.500 8H14" strokeWidth="2.500" /></g>,
  setHome: <g fill="currentColor" stroke="none"><path d="M7 4 14 10H12.500V15H8.500V12H6V15H2V10H.5Z" /><path d="M12 1H15.500V4.500H12ZM10 6 12.500 3 13.500 4 11 6.500Z" /></g>,
  cube: <path d={hexagon + 'M2 4.500 8 8 14 4.500M8 8V14.500'} strokeWidth="1.400" />,
  isoCube: <path d={hexagon + 'M2 11.500 8 8.500 14 11.500M8 8.500V4'} strokeWidth="1.400" />,
  viewXY: <g><path d="M0 1 3 4M3 1 0 4M4 1 5.500 2.500 7 1M5.500 2.500V4" /><path d="M9 3 15 6V12L9 15 3 12V6Z" strokeWidth="1.300" /><path d="M3 11 9 8 15 11V12L9 15 3 12Z" fill="currentColor" /></g>,
  viewXZ: <g><path d="M0 1 3 4M3 1 0 4M4 1H7L4 4H7" /><path d="M9 3 15 6V12L9 15 3 12V6ZM9 9 15 12M9 9V3" strokeWidth="1.300" /><path d="M3 6 9 3V9L3 12Z" fill="currentColor" /></g>,
  viewYZ: <g><path d="M0 1 1.500 2.500 3 1M1.500 2.500V4M4 1H7L4 4H7" /><path d="M9 3 15 6V12L9 15 3 12V6ZM9 9 3 12M9 9V3" strokeWidth="1.300" /><path d="M9 3 15 6V12L9 9Z" fill="currentColor" /></g>,
  persp: <g><path d="M8 2 1.500 8 8 14" strokeWidth="2" /><path d="M9 5V11L5.500 8Z" fill="currentColor" stroke="none" /><path d="M14 2 8 8 14 14" strokeWidth="1.300" strokeDasharray="2 1" /></g>,
  pick: <g><circle cx="3.500" cy="3.500" r="2.200" /><path d="M6 5 9 8" strokeDasharray="1 1" /><path d="M8 6V15L10 13 12 15.500 13.500 14.500 12 12H15Z" fill="currentColor" stroke="none" /></g>,
  one: <path d="M1.500 2.500H14.500V13.500H1.500Z" fill="currentColor" stroke="none" />,
  columns: <path d="M1.500 2.500H7.500V13.500H1.500ZM9 2.500H15V13.500H9Z" fill="currentColor" stroke="none" />,
  rows: <path d="M1.500 2.500H14.500V7.200H1.500ZM1.500 8.800H14.500V13.500H1.500Z" fill="currentColor" stroke="none" />,
  four: <path d="M1.500 2.500H7.300V7.300H1.500ZM8.700 2.500H14.500V7.300H8.700ZM1.500 8.700H7.300V13.500H1.500ZM8.700 8.700H14.500V13.500H8.700Z" fill="currentColor" stroke="none" />,
  titled: <path d="M1.500 2.500H14.500V4.500H1.500ZM1.500 5.500H14.500V13.500H1.500Z" fill="currentColor" stroke="none" />,
  clip: <g><path d="M1 6H10V14H1ZM1 8H10M10 9V6L13 4" strokeWidth="1.500" /><circle cx="13" cy="3.500" r="2" /></g>,
  redCube: <g stroke="none"><path d="M8 1 14 4 8 7 2 4Z" fill="#f2ecee" /><path d="M2 4 8 7V15L2 11.500Z" fill="#e9d9dc" /><path d="M14 4 8 7V15L14 11.500Z" fill="#a9868e" /><path d="M2 8 8 11 14 8V9L8 12 2 9Z" fill="#c9374a" /></g>,
};

function Icon({ name, size }) {
  const Filled = filledIcons[name];
  if (Filled) return <Filled size={size - 1} className="shrink-0" />;
  return (
    <svg width={size} height={size} viewBox="0 0 16 16" fill="none" stroke="currentColor" className="shrink-0" aria-hidden="true">
      {drawnIcons[name]}
    </svg>
  );
}

export default App;
